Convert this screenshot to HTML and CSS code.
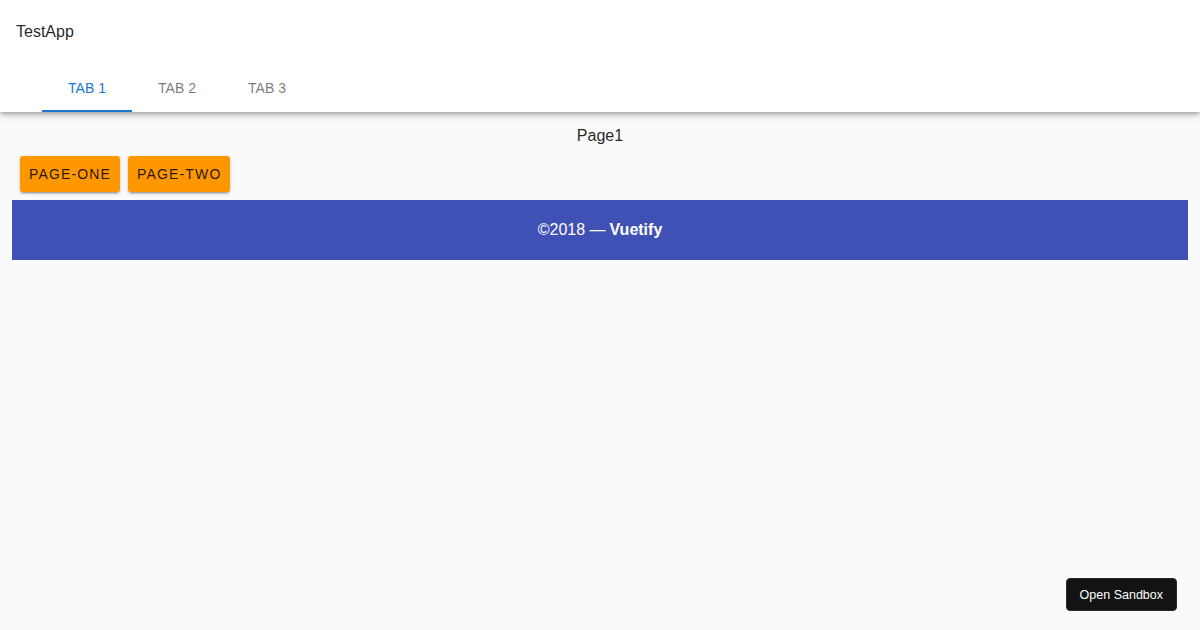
FILE: index.html
```html
<!DOCTYPE html>
<html>
<head>
    <link rel="stylesheet" href="styles.css">
</head>
<body>
    <div class="app">
        <header class="toolbar">
            <div class="toolbar-row">
                <div class="toolbar-title">TestApp</div>
            </div>
            <nav class="tabs">
                <div class="tab active">Tab 1</div>
                <div class="tab">Tab 2</div>
                <div class="tab">Tab 3</div>
            </nav>
        </header>

        <main class="content">
            <div class="page-title">Page1</div>
            <div class="actions">
                <button class="btn">page-one</button>
                <button class="btn">page-two</button>
            </div>
            <footer class="footer">&copy;2018 &mdash; <strong>Vuetify</strong></footer>
        </main>
    </div>

    <button class="sandbox-btn">Open Sandbox</button>
</body>
</html>
```

FILE: styles.css
```css
* {
    margin: 0;
    padding: 0;
    box-sizing: border-box;
}

body {
    font-family: "Liberation Sans", Arial, sans-serif;
    background: #fafafa;
    color: rgba(0, 0, 0, 0.87);
    width: 1200px;
    height: 630px;
    overflow: hidden;
}

.toolbar {
    background: #ffffff;
    box-shadow: 0 2px 4px -1px rgba(0, 0, 0, 0.2), 0 4px 5px 0 rgba(0, 0, 0, 0.14), 0 1px 10px 0 rgba(0, 0, 0, 0.12);
    position: relative;
    z-index: 1;
}

.toolbar-row {
    height: 64px;
    display: flex;
    align-items: center;
    padding: 0 16px;
}

.toolbar-title {
    font-size: 16px;
    color: rgba(0, 0, 0, 0.87);
    margin-top: -1px;
}

.tabs {
    height: 48px;
    display: flex;
    padding-left: 42px;
}

.tab {
    width: 90px;
    display: flex;
    align-items: center;
    justify-content: center;
    font-size: 14px;
    text-transform: uppercase;
    color: rgba(0, 0, 0, 0.54);
    border-bottom: 2px solid transparent;
    padding-top: 2px;
}

.tab.active {
    color: #1976d2;
    border-bottom-color: #1976d2;
}

.content {
    padding: 12px;
}

.page-title {
    text-align: center;
    font-size: 16px;
    line-height: 24px;
    height: 26px;
    color: rgba(0, 0, 0, 0.87);
}

.actions {
    display: flex;
    gap: 8px;
    padding: 6px 8px;
}

.btn {
    height: 36px;
    padding: 0 9px;
    border: none;
    border-radius: 3px;
    background: #ff9800;
    color: rgba(0, 0, 0, 0.87);
    font-family: inherit;
    font-size: 14px;
    font-weight: 500;
    letter-spacing: 1.15px;
    text-transform: uppercase;
    box-shadow: 0 3px 1px -2px rgba(0, 0, 0, 0.2), 0 2px 2px 0 rgba(0, 0, 0, 0.14), 0 1px 5px 0 rgba(0, 0, 0, 0.12);
    cursor: pointer;
}

.footer {
    margin-top: 2px;
    height: 60px;
    background: #3f51b5;
    color: #ffffff;
    display: flex;
    align-items: center;
    justify-content: center;
    font-size: 16px;
    gap: 4px;
}

.footer strong {
    font-weight: 700;
}

.sandbox-btn {
    position: absolute;
    right: 23px;
    bottom: 19px;
    height: 33px;
    padding: 0 13px;
    background: #131313;
    color: #ffffff;
    border: 1px solid #2a2a2a;
    border-radius: 4px;
    font-family: inherit;
    font-size: 12.5px;
}
```
